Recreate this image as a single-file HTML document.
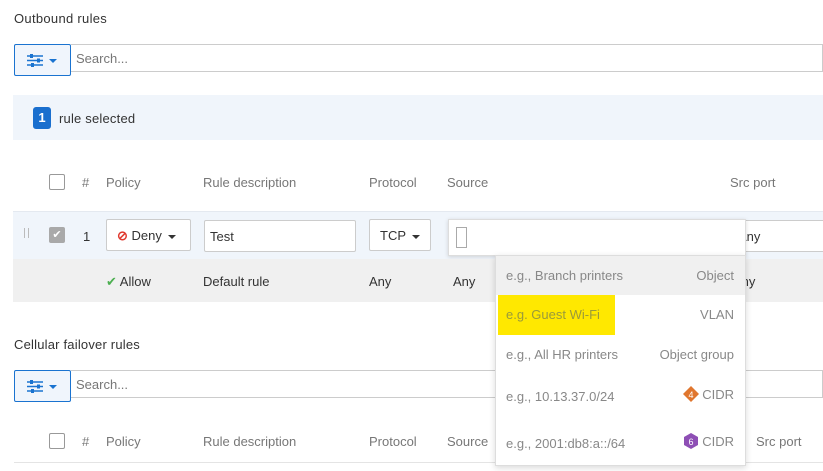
<!DOCTYPE html>
<html><head><meta charset="utf-8"><style>
*{box-sizing:border-box;margin:0;padding:0}
body{width:823px;height:471px;overflow:hidden;background:#fff;font-family:"Liberation Sans",sans-serif;font-size:13px;color:#333;position:relative}
.a{position:absolute;white-space:nowrap}
.g{color:#777}
.fb{position:absolute;width:57px;height:32px;border:1px solid #1a73d0;background:#f0f5fc;border-radius:2px}
.sf{position:absolute;height:28px;border:1px solid #ccc;border-left:none;right:0;padding:6px 5px;color:#777}
.cb{position:absolute;width:16px;height:16px;border:1px solid #999;border-radius:2px;background:#fff}
.btn{position:absolute;border:1px solid #ccc;border-radius:2px;background:#fff;height:32px;padding:8px 10px}
.tri{display:inline-block;width:0;height:0;border-left:4px solid transparent;border-right:4px solid transparent;border-top:4px solid #333;vertical-align:middle;margin-left:6px}
.dd{position:absolute;left:495px;top:255px;width:251px;height:211px;background:#fff;border:1px solid #ddd;box-shadow:0 2px 6px rgba(0,0,0,.15)}
.it{position:absolute;left:0;width:249px;color:#888}
.it .l{position:absolute;left:10px}
.it .r{position:absolute;right:11px}
</style></head><body>
<div class="a" style="left:14px;top:11px;letter-spacing:.3px">Outbound rules</div>
<div class="fb" style="left:14px;top:44px"><svg width="57" height="32"><g stroke="#1a73d0" stroke-width="1.5"><line x1="12" y1="11" x2="28" y2="11"/><line x1="12" y1="15.5" x2="28" y2="15.5"/><line x1="12" y1="20" x2="28" y2="20"/></g><g fill="#1a73d0"><rect x="15" y="9" width="3" height="4"/><rect x="22" y="13.5" width="3" height="4"/><rect x="16" y="18" width="3" height="4"/><path d="M34 14h8l-4 4z"/></g></svg></div>
<div class="sf" style="left:71px;top:44px">Search...</div>
<div class="a" style="left:13px;top:95px;width:810px;height:45px;background:#f0f5fb"></div>
<div class="a" style="left:33px;top:107px;width:18px;height:22px;background:#1a6fce;border-radius:3px;color:#fff;font-weight:bold;text-align:center;line-height:22px">1</div>
<div class="a" style="left:59px;top:111px;letter-spacing:.2px">rule selected</div>

<div class="cb" style="left:49px;top:174px"></div>
<div class="a g" style="left:82px;top:175px">#</div>
<div class="a g" style="left:106px;top:175px">Policy</div>
<div class="a g" style="left:203px;top:175px">Rule description</div>
<div class="a g" style="left:369px;top:175px">Protocol</div>
<div class="a g" style="left:447px;top:175px">Source</div>
<div class="a g" style="left:730px;top:175px">Src port</div>

<div class="a" style="left:13px;top:211px;width:810px;height:48px;background:#f0f5fb;border-top:1px solid #e4e9f0"></div>
<div class="a" style="left:24px;top:228px;width:5px;height:10px;border-left:1px solid #bbb;border-right:1px solid #bbb"></div>
<div class="a" style="left:49px;top:227px;width:16px;height:16px;background:#a9a9a9;border-radius:2px;color:#fff;font-size:11px;text-align:center;line-height:16px">✔</div>
<div class="a" style="left:83px;top:229px">1</div>
<div class="btn" style="left:106px;top:219px;width:85px"><span style="color:#e03a2f;font-weight:bold">⊘</span> Deny<span class="tri"></span></div>
<div class="btn" style="left:204px;top:220px;width:152px;padding-left:5px">Test</div>
<div class="btn" style="left:369px;top:219px;width:62px">TCP<span class="tri"></span></div>
<div class="btn" style="left:728px;top:220px;width:100px;padding-left:9px">Any</div>
<div class="a" style="left:448px;top:219px;width:298px;height:37px;background:#fff;border:1px solid #ddd;box-shadow:0 1px 4px rgba(0,0,0,.15)"><div class="a" style="left:7px;top:7px;width:11px;height:21px;border:1px solid #aaa"></div></div>

<div class="a" style="left:13px;top:259px;width:810px;height:43px;background:#f0f0f0"></div>
<div class="a" style="left:106px;top:274px"><span style="color:#4caf50">✔</span> Allow</div>
<div class="a" style="left:203px;top:274px">Default rule</div>
<div class="a" style="left:369px;top:274px">Any</div>
<div class="a" style="left:453px;top:274px">Any</div>
<div class="a" style="left:733px;top:274px">Any</div>

<div class="a" style="left:14px;top:337px;letter-spacing:.2px">Cellular failover rules</div>
<div class="fb" style="left:14px;top:370px"><svg width="57" height="32"><g stroke="#1a73d0" stroke-width="1.5"><line x1="12" y1="11" x2="28" y2="11"/><line x1="12" y1="15.5" x2="28" y2="15.5"/><line x1="12" y1="20" x2="28" y2="20"/></g><g fill="#1a73d0"><rect x="15" y="9" width="3" height="4"/><rect x="22" y="13.5" width="3" height="4"/><rect x="16" y="18" width="3" height="4"/><path d="M34 14h8l-4 4z"/></g></svg></div>
<div class="sf" style="left:71px;top:370px">Search...</div>
<div class="cb" style="left:49px;top:433px"></div>
<div class="a g" style="left:82px;top:434px">#</div>
<div class="a g" style="left:106px;top:434px">Policy</div>
<div class="a g" style="left:203px;top:434px">Rule description</div>
<div class="a g" style="left:369px;top:434px">Protocol</div>
<div class="a g" style="left:447px;top:434px">Source</div>
<div class="a g" style="left:756px;top:434px">Src port</div>
<div class="a" style="left:14px;top:462px;width:809px;height:1px;background:#e4e4e4"></div>

<div class="dd">
<div class="it" style="top:0;height:39px;background:#f0f0f0"><span class="l" style="top:12px">e.g., Branch printers</span><span class="r" style="top:12px">Object</span></div>
<div class="it" style="top:39px;height:40px"><span class="a" style="left:2px;top:0;width:117px;height:40px;background:#ffe800"></span><span class="l" style="top:12px;color:#9a9a3a">e.g. Guest Wi-Fi</span><span class="r" style="top:12px">VLAN</span></div>
<div class="it" style="top:79px;height:39px"><span class="l" style="top:12px">e.g., All HR printers</span><span class="r" style="top:12px">Object group</span></div>
<div class="it" style="top:118px;height:43px"><span class="l" style="top:15px">e.g., 10.13.37.0/24</span><span class="r" style="top:12px"><svg width="16" height="16" style="vertical-align:-3px"><path d="M8 0L16 8L8 16L0 8z" fill="#e0762e"/><text x="8" y="12" font-size="9" fill="#fff" text-anchor="middle" font-family="Liberation Sans">4</text></svg> CIDR</span></div>
<div class="it" style="top:161px;height:46px"><span class="l" style="top:19px">e.g., 2001:db8:a::/64</span><span class="r" style="top:16px"><svg width="16" height="16" style="vertical-align:-3px"><path d="M8 0L15 4V12L8 16L1 12V4z" fill="#8e4fb5"/><text x="8" y="12" font-size="9" fill="#fff" text-anchor="middle" font-family="Liberation Sans">6</text></svg> CIDR</span></div>
</div>
</body></html>
